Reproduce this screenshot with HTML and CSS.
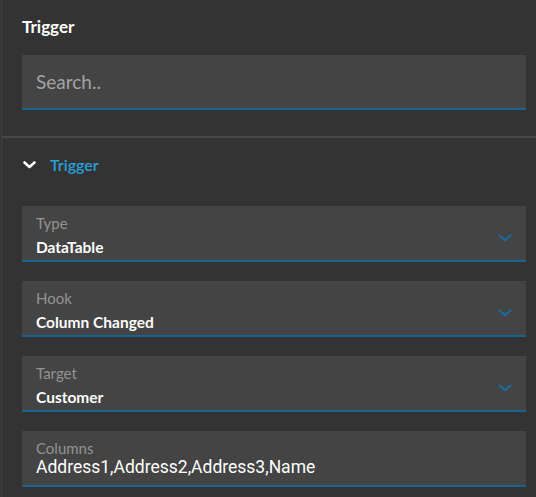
FILE: index.html
```html
<!DOCTYPE html>
<html>
<head>
<meta charset="utf-8">
<link rel="stylesheet" href="styles.css">
</head>
<body>
<div class="panel">
  <div class="top">
    <div class="title">Trigger</div>
    <div class="search">Search..</div>
  </div>
  <div class="divider"></div>
  <div class="section">
    <div class="section-head">
      <svg class="head-chev" width="13" height="8" viewBox="0 0 13 8"><path d="M1.5 1.5 L6.5 6 L11.5 1.5" fill="none" stroke="#ffffff" stroke-width="2.6" stroke-linecap="round" stroke-linejoin="round"/></svg>
      <span class="section-title">Trigger</span>
    </div>
    <div class="fields">
      <div class="field">
        <div class="field-body">
          <div class="label">Type</div>
          <div class="value">DataTable</div>
        </div>
        <svg class="chev" width="14" height="8" viewBox="0 0 14 8"><path d="M1.5 1.5 L7 6.2 L12.5 1.5" fill="none" stroke="#1d6a9c" stroke-width="2.2" stroke-linecap="round" stroke-linejoin="round"/></svg>
      </div>
      <div class="field">
        <div class="field-body">
          <div class="label">Hook</div>
          <div class="value">Column Changed</div>
        </div>
        <svg class="chev" width="14" height="8" viewBox="0 0 14 8"><path d="M1.5 1.5 L7 6.2 L12.5 1.5" fill="none" stroke="#1d6a9c" stroke-width="2.2" stroke-linecap="round" stroke-linejoin="round"/></svg>
      </div>
      <div class="field">
        <div class="field-body">
          <div class="label">Target</div>
          <div class="value">Customer</div>
        </div>
        <svg class="chev" width="14" height="8" viewBox="0 0 14 8"><path d="M1.5 1.5 L7 6.2 L12.5 1.5" fill="none" stroke="#1d6a9c" stroke-width="2.2" stroke-linecap="round" stroke-linejoin="round"/></svg>
      </div>
      <div class="field">
        <div class="field-body">
          <div class="label">Columns</div>
          <div class="value value-text">Address1,Address2,Address3,Name</div>
        </div>
      </div>
    </div>
  </div>
</div>
</body>
</html>
```

FILE: styles.css
```css
html, body {
  margin: 0;
  padding: 0;
  background: #333333;
}
body {
  font-family: Lato, "Liberation Sans", sans-serif;
  color: #ffffff;
}
.panel {
  margin-left: 1px;
  border-left: 1px solid #3f3f3f;
  min-height: 497px;
  box-sizing: border-box;
}
.top {
  padding: 17px 10px 26px 20px;
}
.title {
  font-size: 17px;
  line-height: 20px;
  font-weight: 700;
  color: #ffffff;
  margin-bottom: 18px;
}
.search {
  height: 55px;
  box-sizing: border-box;
  padding: 15px 14px 0 14px;
  background: #444444;
  border-bottom: 2px solid #1d6391;
  font-size: 19px;
  line-height: 23px;
  color: #a3a3a3;
}
.divider {
  height: 2px;
  background: #474747;
}
.section {
  padding: 17px 10px 0 20px;
}
.section-head {
  display: flex;
  align-items: center;
  height: 20px;
  margin-bottom: 31px;
}
.head-chev {
  margin-left: 1px;
  margin-right: 14px;
}
.section-title {
  font-size: 16px;
  line-height: 20px;
  font-weight: 600;
  color: #29a0d8;
}
.fields {
  display: flex;
  flex-direction: column;
  gap: 19px;
}
.field {
  height: 56px;
  box-sizing: border-box;
  background: #444444;
  border-bottom: 2px solid #1d6391;
  display: flex;
  padding: 8px 14px 0 14px;
}
.field-body {
  flex: 1;
}
.label {
  font-size: 15px;
  line-height: 18px;
  color: #939393;
}
.value {
  font-size: 15.5px;
  line-height: 20px;
  font-weight: 700;
  color: #ffffff;
  margin-top: 5px;
}
.value-text {
  font-family: Roboto, "Liberation Sans", sans-serif;
  font-weight: 400;
  font-size: 17.5px;
  line-height: 22px;
  margin-top: -1px;
}
.chev {
  margin-top: 20px;
}
```
